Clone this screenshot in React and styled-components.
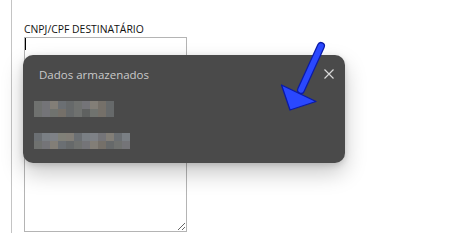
import React from "react";
import styled, { createGlobalStyle } from "styled-components";

const Global = createGlobalStyle`
  html, body { margin: 0; padding: 0; background: #fff; }
  body { width: 470px; height: 233px; overflow: hidden; font-family: "Open Sans", "Liberation Sans", sans-serif; }
`;

const Page = styled.div`
  position: relative;
  width: 470px;
  height: 233px;
  padding-left: 11px;
  box-sizing: border-box;
`;

const Column = styled.div`
  height: 233px;
  border-left: 1px solid #c4c4c4;
  padding: 24px 0 0 12px;
  box-sizing: border-box;
  display: flex;
  flex-direction: column;
  gap: 2px;
`;

const Label = styled.label`
  font-family: "Open Sans", "Liberation Sans", sans-serif;
  font-size: 10.4px;
  line-height: 11px;
  color: #111;
`;

const Area = styled.textarea`
  width: 163px;
  height: 195px;
  box-sizing: border-box;
  border: 1px solid #b4b4b4;
  border-radius: 0;
  margin: 0;
  outline: none;
  padding: 2px;
  resize: both;
  background: #fff;
`;

const Caret = styled.span`
  position: absolute;
  left: 25px;
  top: 38px;
  width: 1px;
  height: 12px;
  background: #000;
`;

const Popup = styled.div`
  position: absolute;
  left: 23px;
  top: 55px;
  width: 322px;
  height: 108px;
  box-sizing: border-box;
  background: #4a4a4a;
  border-radius: 10px;
  box-shadow: 0 10px 22px rgba(0, 0, 0, 0.22), 0 2px 6px rgba(0, 0, 0, 0.15);
  padding: 10px 10px 0 11px;
  display: flex;
  flex-direction: column;
`;

const Header = styled.div`
  display: flex;
  align-items: center;
  justify-content: space-between;
  height: 18px;
  padding-left: 5px;
`;

const Title = styled.span`
  font-family: "Open Sans", "Liberation Sans", sans-serif;
  font-size: 11.5px;
  color: #c9c9c9;
`;

const Close = styled.button`
  background: none;
  border: none;
  padding: 0;
  width: 12px;
  height: 12px;
  display: flex;
  color: #d8d8d8;
  cursor: pointer;
`;

const Items = styled.div`
  display: flex;
  flex-direction: column;
  gap: 16px;
  margin-top: 18px;
`;

const Pixels = styled.div`
  display: grid;
  grid-template-columns: repeat(${(p) => p.$cols}, 8px);
  grid-auto-rows: 8px;
`;

const Cell = styled.div`
  background: ${(p) => p.$c};
`;

const palette = ["#6b6f73", "#757069", "#7e8186", "#6f716f", "#78797d", "#827e77", "#70736f", "#7a7f84", "#66696a", "#808078", "#747478", "#5f6160"];

function Blur({ cols, seed }) {
  const cells = [];
  for (let i = 0; i < cols * 2; i++) {
    cells.push(<Cell key={i} $c={palette[(i * 7 + seed * 3 + (i >> 2)) % palette.length]} />);
  }
  return <Pixels $cols={cols}>{cells}</Pixels>;
}

const Annot = styled.svg`
  position: absolute;
  left: 0;
  top: 0;
  pointer-events: none;
`;

export default function App() {
  return (
    <>
      <Global />
      <Page>
        <Column>
          <Label>CNPJ/CPF DESTINATÁRIO</Label>
          <Area />
        </Column>
        <Caret />
        <Popup>
          <Header>
            <Title>Dados armazenados</Title>
            <Close aria-label="Fechar">
              <svg width="12" height="12" viewBox="0 0 12 12">
                <path d="M1.5 1.5 L10.5 10.5 M10.5 1.5 L1.5 10.5" stroke="currentColor" strokeWidth="1.2" fill="none" />
              </svg>
            </Close>
          </Header>
          <Items>
            <Blur cols={10} seed={1} />
            <Blur cols={12} seed={4} />
          </Items>
        </Popup>
        <Annot width="470" height="233" viewBox="0 0 470 233">
          <path d="M321 46 L301 90" stroke="#0a1aa8" strokeWidth="8" strokeLinecap="round" fill="none" />
          <path d="M321 46 L301 90" stroke="#2a48ff" strokeWidth="5.5" strokeLinecap="round" fill="none" />
          <path d="M281.5 85 L290 110 L316 101.5 Z" fill="#2a48ff" stroke="#0a1aa8" strokeWidth="1.3" strokeLinejoin="round" />
        </Annot>
      </Page>
    </>
  );
}
